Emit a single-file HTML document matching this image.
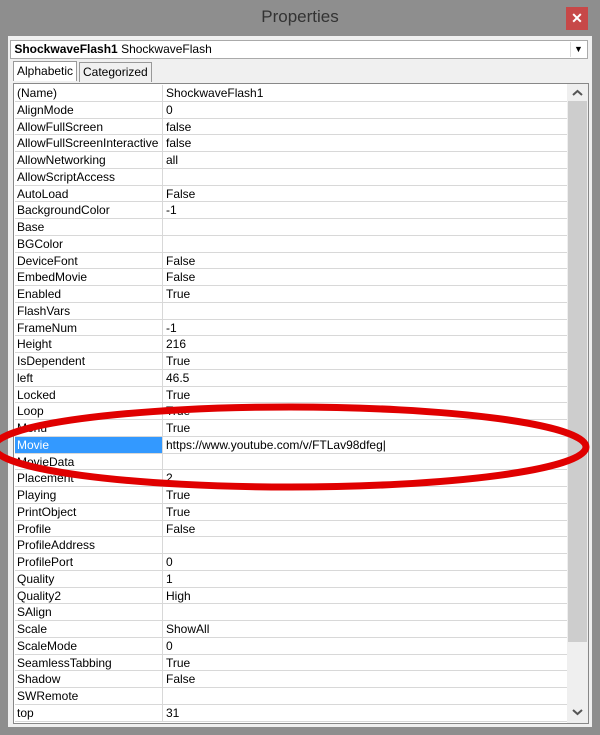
<!DOCTYPE html>
<html><head><style>
body{margin:0;width:600px;height:735px;background:#8e8e8e;position:relative;overflow:hidden;font-family:"Liberation Sans",sans-serif;font-size:12px;color:#000}
.title{position:absolute;top:7px;left:0;width:600px;text-align:center;font-size:17px;color:#333}
.close{position:absolute;left:566px;top:7px;width:22px;height:23px;background:#c74848;color:#fff;text-align:center;line-height:22px;font-size:14px;font-weight:bold}
.panel{position:absolute;left:8px;top:36px;width:584px;height:691px;background:#f0f0f0}
.combo{position:absolute;left:10px;top:40px;width:576px;height:17px;background:#fff;border:1px solid #aaa;line-height:17px}
.combo .dd{position:absolute;right:1px;top:1px;width:15px;height:15px;border-left:1px solid #ddd;text-align:center;font-size:9px;line-height:15px}
.tab{position:absolute;top:62px;height:19px;line-height:19px;padding:0 3px;border:1px solid #999;border-bottom:none;background:#f0f0f0}
.grid{position:absolute;left:13px;top:83px;width:574px;height:639px;border:1px solid #888;background:#fff;overflow:hidden}
.rows{position:absolute;left:1px;top:1px;width:552px}
.r{height:16.76px;box-sizing:border-box;border-bottom:1px solid #d8d8d8;display:flex;line-height:16px}
.r span:first-child{width:145px;border-right:1px solid #d8d8d8;padding-left:2px}
.r span:last-child{padding-left:3px}
.sel span:first-child{background:#3399ff;color:#fff}
.sb{position:absolute;left:553px;top:0;width:21px;height:639px;background:#efefef}
.thumb{position:absolute;left:1px;top:17px;width:19px;height:541px;background:#cdcdcd}
</style></head><body>
<div class="title">Properties</div>
<div class="close">✕</div>
<div class="panel"></div>
<div class="combo">&nbsp;<b>ShockwaveFlash1</b> ShockwaveFlash<div class="dd">▼</div></div>
<div class="tab" style="left:13px;background:#fff;top:61px">Alphabetic</div>
<div class="tab" style="left:79px">Categorized</div>
<div class="grid"><div class="rows">
<div class="r"><span>(Name)</span><span>ShockwaveFlash1</span></div>
<div class="r"><span>AlignMode</span><span>0</span></div>
<div class="r"><span>AllowFullScreen</span><span>false</span></div>
<div class="r"><span>AllowFullScreenInteractive</span><span>false</span></div>
<div class="r"><span>AllowNetworking</span><span>all</span></div>
<div class="r"><span>AllowScriptAccess</span><span></span></div>
<div class="r"><span>AutoLoad</span><span>False</span></div>
<div class="r"><span>BackgroundColor</span><span>-1</span></div>
<div class="r"><span>Base</span><span></span></div>
<div class="r"><span>BGColor</span><span></span></div>
<div class="r"><span>DeviceFont</span><span>False</span></div>
<div class="r"><span>EmbedMovie</span><span>False</span></div>
<div class="r"><span>Enabled</span><span>True</span></div>
<div class="r"><span>FlashVars</span><span></span></div>
<div class="r"><span>FrameNum</span><span>-1</span></div>
<div class="r"><span>Height</span><span>216</span></div>
<div class="r"><span>IsDependent</span><span>True</span></div>
<div class="r"><span>left</span><span>46.5</span></div>
<div class="r"><span>Locked</span><span>True</span></div>
<div class="r"><span>Loop</span><span>True</span></div>
<div class="r"><span>Menu</span><span>True</span></div>
<div class="r sel"><span>Movie</span><span>https://www.youtube.com/v/FTLav98dfeg|</span></div>
<div class="r"><span>MovieData</span><span></span></div>
<div class="r"><span>Placement</span><span>2</span></div>
<div class="r"><span>Playing</span><span>True</span></div>
<div class="r"><span>PrintObject</span><span>True</span></div>
<div class="r"><span>Profile</span><span>False</span></div>
<div class="r"><span>ProfileAddress</span><span></span></div>
<div class="r"><span>ProfilePort</span><span>0</span></div>
<div class="r"><span>Quality</span><span>1</span></div>
<div class="r"><span>Quality2</span><span>High</span></div>
<div class="r"><span>SAlign</span><span></span></div>
<div class="r"><span>Scale</span><span>ShowAll</span></div>
<div class="r"><span>ScaleMode</span><span>0</span></div>
<div class="r"><span>SeamlessTabbing</span><span>True</span></div>
<div class="r"><span>Shadow</span><span>False</span></div>
<div class="r"><span>SWRemote</span><span></span></div>
<div class="r"><span>top</span><span>31</span></div>
</div>
<div class="sb"><div class="thumb"></div>
<svg style="position:absolute;left:5px;top:5px" width="11" height="8"><path d="M1 6L5.5 2L10 6" stroke="#555" stroke-width="2" fill="none"/></svg>
<svg style="position:absolute;left:5px;top:624px" width="11" height="8"><path d="M1 2L5.5 6L10 2" stroke="#555" stroke-width="2" fill="none"/></svg>
</div></div>
<svg style="position:absolute;left:0;top:0" width="600" height="735"><ellipse cx="290" cy="447" rx="296" ry="40" fill="none" stroke="#e00000" stroke-width="7"/></svg>
</body></html>
